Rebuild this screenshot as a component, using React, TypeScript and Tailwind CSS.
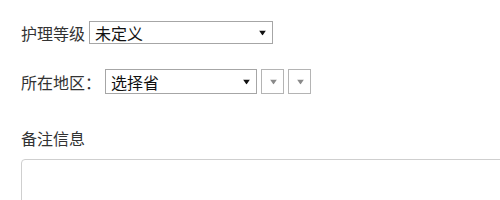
const font = { fontFamily: '"Noto Sans CJK SC", "Noto Sans", sans-serif' };

function Arrow({ muted }: { muted?: boolean }) {
  return (
    <svg width="7" height="5" viewBox="0 0 7 5" className="absolute right-[6px] top-1/2 -translate-y-1/2">
      <path d="M0 0h7L3.5 5z" fill={muted ? "#8a8a8a" : "#111"} />
    </svg>
  );
}

function FakeSelect({ text, width, height, muted }: { text?: string; width: string; height: string; muted?: boolean }) {
  return (
    <div
      className={`relative flex items-center border box-border ${muted ? "border-[#b4b4b4]" : "border-[#a6a6a6]"} bg-white pl-[5px] text-[16px] text-[#111] ${width} ${height}`}
    >
      {text}
      <Arrow muted={muted} />
    </div>
  );
}

export default function App() {
  return (
    <div className="w-[500px] h-[200px] overflow-hidden bg-white pl-[21px] text-[#333]" style={font}>
      <div className="mt-[21px] flex items-center gap-[4px] h-[23px] leading-none">
        <span className="text-[16px]">护理等级</span>
        <FakeSelect text="未定义" width="w-[184px]" height="h-[23px]" />
      </div>

      <div className="mt-[25px] flex items-center h-[25px] leading-none">
        <span className="text-[16px] w-[84px]">所在地区：</span>
        <FakeSelect text="选择省" width="w-[152px]" height="h-[25px]" />
        <div className="ml-[4px]">
          <FakeSelect width="w-[23px]" height="h-[25px]" muted />
        </div>
        <div className="ml-[4px]">
          <FakeSelect width="w-[23px]" height="h-[25px]" muted />
        </div>
      </div>

      <div className="mt-[33px] text-[16px] leading-[22px]">备注信息</div>

      <textarea className="mt-[10px] block w-[520px] h-[80px] border border-[#cfcfcf] rounded-[4px] resize-none outline-none" />
    </div>
  );
}
